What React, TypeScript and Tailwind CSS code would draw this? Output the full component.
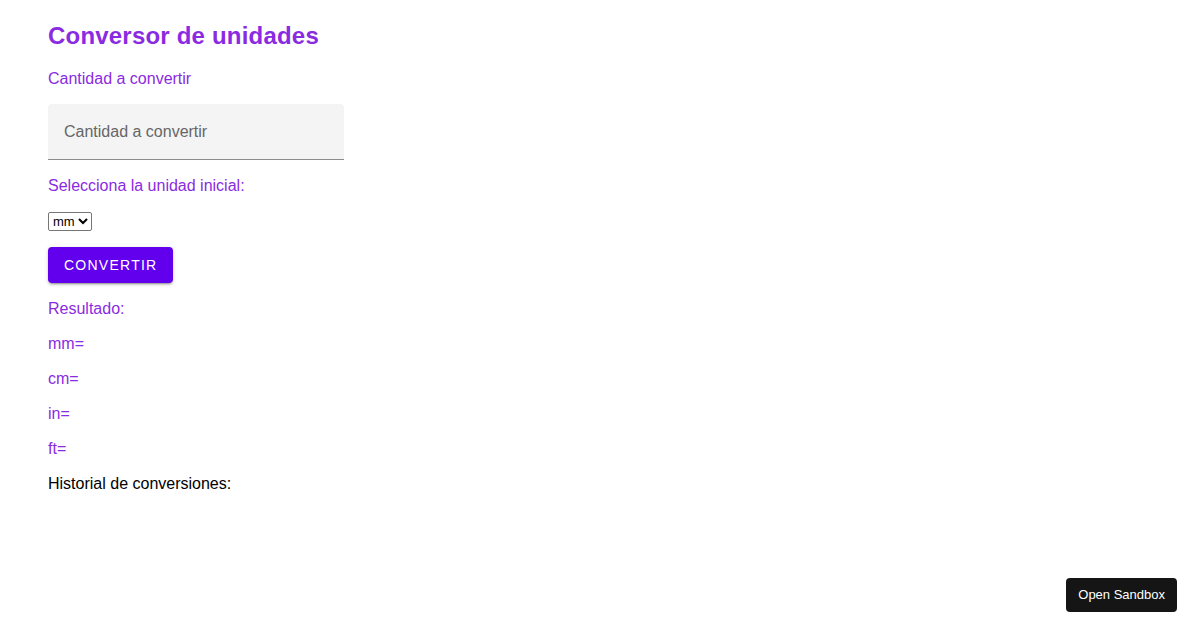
export default function App() {
  const results = ["mm=", "cm=", "in=", "ft="];
  return (
    <main className="min-h-[630px] w-full bg-white font-['Liberation_Sans',Arial,sans-serif] relative">
      <div className="pl-12 pt-[22px] flex flex-col items-start">
        <h2 className="text-[24px] leading-[28px] font-bold tracking-[0.2px] text-[#8a2be2]">Conversor de unidades</h2>
        <p className="mt-5 text-base leading-[18px] text-[#8a2be2]">Cantidad a convertir</p>
        <input
          type="text"
          placeholder="Cantidad a convertir"
          className="mt-4 w-[296px] h-[56px] px-4 bg-[#f4f4f4] rounded-t border-b border-[#8c8c8c] text-base text-[#333] placeholder:text-[#666] outline-none"
        />
        <p className="mt-[17px] text-base leading-[18px] text-[#8a2be2]">Selecciona la unidad inicial:</p>
        <select className="mt-[17px] h-[19px] text-[13px] border border-[#767676] rounded-[2px] bg-white text-black font-['Liberation_Sans',Arial,sans-serif]">
          <option>mm</option>
          <option>cm</option>
          <option>in</option>
          <option>ft</option>
        </select>
        <button className="mt-4 h-9 px-4 rounded bg-[#6200ee] text-white text-sm font-normal tracking-[1.25px] shadow-[0_3px_1px_-2px_rgba(0,0,0,0.2),0_2px_2px_0_rgba(0,0,0,0.14),0_1px_5px_0_rgba(0,0,0,0.12)]">
          CONVERTIR
        </button>
        <p className="mt-[17px] text-base leading-[18px] text-[#8a2be2]">Resultado:</p>
        {results.map((r) => (
          <p key={r} className="mt-[17px] text-base leading-[18px] text-[#8a2be2]">
            {r}
          </p>
        ))}
        <p className="mt-[17px] text-base leading-[18px] text-black">Historial de conversiones:</p>
      </div>
      <button className="fixed right-[23px] bottom-[18px] h-[34px] px-3 rounded bg-[#151515] text-[13px] text-white">
        Open Sandbox
      </button>
    </main>
  );
}
